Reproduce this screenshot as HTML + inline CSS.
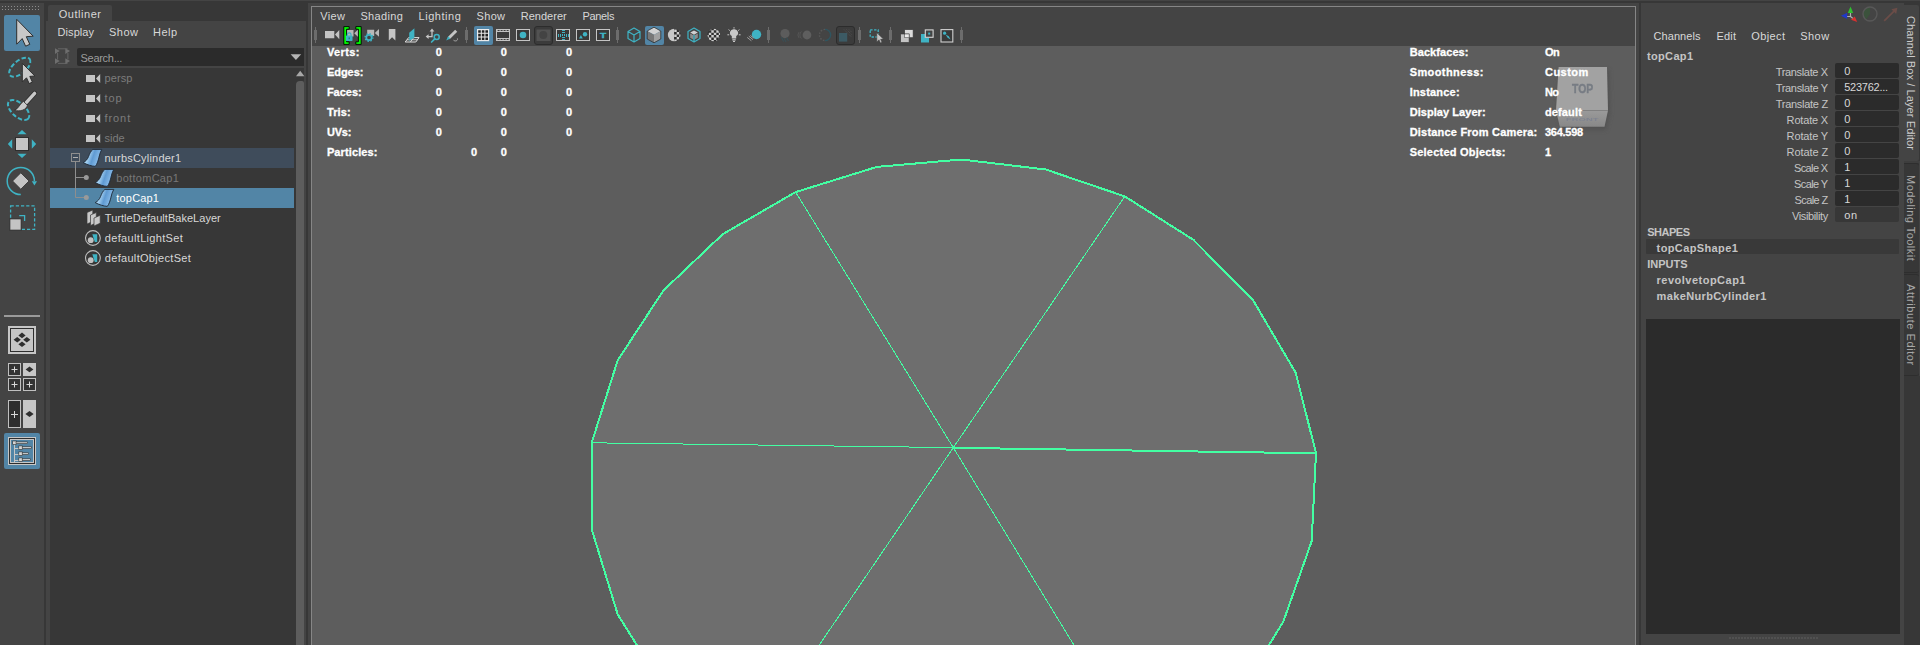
<!DOCTYPE html>
<html lang="en">
<head>
<meta charset="utf-8">
<title>Maya - Outliner / Viewport / Channel Box</title>
<style>
html,body{margin:0;padding:0;}
body{width:1920px;height:645px;overflow:hidden;background:#373737;position:relative;font-family:"Liberation Sans",sans-serif;font-size:11px;color:#ccc;}
div,svg{position:absolute;box-sizing:border-box;}
.t{white-space:pre;z-index:2;}
.p{background:#444444;}
.fld{background:#2b2b2b;border-radius:2px;left:1835px;width:64px;height:15px;}
.row{left:50px;width:244px;height:20px;}
</style>
</head>
<body>
<!-- top strip -->
<div class="p" style="left:0;top:0;width:1920px;height:1px;"></div>
<!-- left tool box -->
<div class="p" id="toolbox" style="left:0;top:3px;width:44px;height:642px;"></div>
<svg width="44" height="645" viewBox="0 0 44 645" style="left:0;top:0;">
<g fill="#8c8c8c">
<path d="M2 6h1v1h-1zM5 6h1v1h-1zM8 6h1v1h-1zM11 6h1v1h-1zM14 6h1v1h-1zM17 6h1v1h-1zM20 6h1v1h-1zM23 6h1v1h-1zM26 6h1v1h-1zM29 6h1v1h-1zM32 6h1v1h-1zM35 6h1v1h-1zM38 6h1v1h-1z"/>
<path d="M2 9h1v1h-1zM5 9h1v1h-1zM8 9h1v1h-1zM11 9h1v1h-1zM14 9h1v1h-1zM17 9h1v1h-1zM20 9h1v1h-1zM23 9h1v1h-1zM26 9h1v1h-1zM29 9h1v1h-1zM32 9h1v1h-1zM35 9h1v1h-1zM38 9h1v1h-1z"/>
</g>
<!-- select tool (active) -->
<rect x="4" y="15" width="36" height="36" rx="2" fill="#5285a6"/>
<path d="M16.7 19.3V44.2L22.2 38.6L25.6 46.2L29.8 44.3L26.3 36.7L33.2 36.2Z" fill="#c8c8c8" stroke="#2e2e2e" stroke-width="1" stroke-linejoin="round"/>
<!-- lasso -->
<ellipse cx="19.8" cy="67.2" rx="12.8" ry="6.4" transform="rotate(-40 19.8 67.2)" fill="none" stroke="#3fb3c4" stroke-width="2" stroke-dasharray="4.4 2.2"/>
<path d="M22.3 63.3V82L26.5 77.8L29.2 83.6L32.4 82.1L29.8 76.4L34.9 76Z" fill="#c8c8c8" stroke="#2e2e2e" stroke-width="1" stroke-linejoin="round"/>
<!-- paint select -->
<ellipse cx="18.6" cy="110" rx="13" ry="6.8" transform="rotate(42 18.6 110)" fill="none" stroke="#3fb3c4" stroke-width="2" stroke-dasharray="4.4 2.2"/>
<path d="M34.6 93.4L26.2 102.6" stroke="#2e2e2e" stroke-width="5" stroke-linecap="round"/>
<path d="M34.6 93.4L26.2 102.6" stroke="#c8c8c8" stroke-width="3.4" stroke-linecap="round"/>
<path d="M23.400 101.400L27.400 105.200C26.600 109.800 20 112 14.400 110.200C18.800 108.800 19.400 104 23.400 101.400Z" fill="#c8c8c8" stroke="#2e2e2e" stroke-width="0.800"/>
<!-- move -->
<rect x="15.5" y="137.5" width="13" height="13" fill="#c4c4c4" stroke="#2e2e2e" stroke-width="1"/>
<g fill="#3fb3c4"><path d="M22 130L26.6 134.3H17.4Z"/><path d="M22 158L26.6 153.7H17.4Z"/><path d="M7.8 144L12.2 139.2V148.8Z"/><path d="M36.2 144L31.8 139.2V148.8Z"/></g>
<!-- rotate -->
<path d="M20.8 194.6A13.6 13.6 0 1 1 34.4 181" fill="none" stroke="#3fb3c4" stroke-width="1.5"/>
<path d="M31.8 181.2H37L34.4 185.4Z" fill="#3fb3c4"/>
<path d="M20.8 172.8L29 181L20.8 189.2L12.6 181Z" fill="#c4c4c4" stroke="#2e2e2e" stroke-width="0.8"/>
<!-- scale -->
<rect x="10.6" y="205.8" width="24" height="23.6" fill="none" stroke="#3fb3c4" stroke-width="1.3" stroke-dasharray="3.2 2"/>
<path d="M19.2 215.6H24.6V221" fill="none" stroke="#3fb3c4" stroke-width="1.3"/>
<rect x="9.8" y="218.8" width="11.4" height="11.4" fill="#c4c4c4" stroke="#2e2e2e" stroke-width="1"/>
<!-- separator -->
<rect x="4" y="315" width="36" height="2" fill="#9a9a9a"/>
<!-- single pane -->
<rect x="8" y="326" width="28" height="28" fill="#c6c6c6"/>
<rect x="10.5" y="328.5" width="23" height="23" fill="none" stroke="#2e2e2e" stroke-width="1"/>
<g fill="#2e2e2e"><path d="M22 332.6L25.6 335.4L22 338.2L18.4 335.4Z"/><path d="M22 341.4L25.6 344.2L22 347L18.4 344.2Z"/><path d="M17.2 337L20.8 339.8L17.2 342.6L13.6 339.8Z"/><path d="M26.8 337L30.4 339.8L26.8 342.6L23.2 339.8Z"/></g>
<!-- four pane -->
<g fill="#333333" stroke="#c0c0c0" stroke-width="1">
<rect x="8.5" y="363.5" width="12" height="12"/><rect x="8.5" y="378.5" width="12" height="12"/><rect x="23.5" y="378.5" width="12" height="12"/>
</g>
<rect x="23" y="363" width="13" height="13" fill="#c6c6c6"/>
<path d="M29.5 366.6L33.4 369.4L29.5 372.2L25.6 369.4Z" fill="#2e2e2e"/>
<g stroke="#d8d8d8" stroke-width="1" fill="none"><path d="M11.5 369.5h6M14.5 366.5v6M11.5 384.5h6M14.5 381.5v6M26.5 384.5h6M29.5 381.5v6"/></g>
<!-- two pane -->
<rect x="8.5" y="400.5" width="12" height="27" fill="#2e2e2e" stroke="#c0c0c0" stroke-width="1"/>
<rect x="23" y="400" width="13" height="28" fill="#c6c6c6"/>
<path d="M29.5 411L33.6 414L29.5 417L25.4 414Z" fill="#2e2e2e"/>
<path d="M11 414.5h7M14.5 411v7" stroke="#d8d8d8" stroke-width="1" fill="none"/>
<!-- outliner pane (active) -->
<rect x="4" y="433" width="36" height="36" rx="2" fill="#5285a6"/>
<rect x="8" y="437" width="28" height="28" fill="#c6c6c6"/>
<rect x="9.500" y="438.500" width="25" height="25" fill="#c6c6c6" stroke="#2e2e2e" stroke-width="1"/>
<rect x="11" y="440" width="22" height="22" fill="#5285a6"/>
<g stroke="#c6c6c6" stroke-width="1" fill="none"><path d="M14.5 444v19M14.500 448.5h5M14.5 454.5h5M14.5 460.5h5"/></g>
<g fill="#d6d6d6" stroke="#2e2e2e" stroke-width="0.6">
<rect x="12.7" y="441" width="3.6" height="3.6"/><rect x="16" y="441.9" width="11.4" height="1.8"/>
<rect x="18.8" y="445.9" width="3.6" height="3.6"/><rect x="22.2" y="446.8" width="9.2" height="1.8"/>
<rect x="18.8" y="451.9" width="3.6" height="3.6"/><rect x="22.2" y="452.8" width="6.2" height="1.8"/>
<rect x="18.8" y="457.9" width="3.6" height="3.6"/><rect x="22.2" y="458.8" width="8.2" height="1.8"/>
</g>
</svg>

<!-- outliner -->
<div class="p" style="left:48px;top:5px;width:64px;height:17px;border-radius:2px 2px 0 0;"></div>
<div class="p" style="left:46px;top:21px;width:260px;height:624px;"></div>
<div style="left:77px;top:48px;width:227px;height:18px;background:#2b2b2b;border-radius:2px 0 0 2px;"></div>
<div style="left:50px;top:68px;width:254px;height:577px;background:#373737;"></div>
<!-- row highlights -->
<div class="row" style="top:148px;background:#3f4c5b;"></div>
<div class="row" style="top:188px;background:#5285a6;"></div>
<!-- scrollbar -->
<div style="left:296px;top:81px;width:8px;height:570px;background:#5d5d5d;border-radius:4px 2px 0 0;"></div>
<svg width="260" height="600" viewBox="46 45 260 600" style="left:46px;top:45px;">
<defs>
<linearGradient id="ng" x1="0" y1="0.2" x2="1" y2="0.5">
<stop offset="0" stop-color="#8fc0ea"/><stop offset="0.3" stop-color="#a6d2f2"/><stop offset="0.55" stop-color="#5f9ad2"/><stop offset="0.8" stop-color="#7fb4e4"/><stop offset="1" stop-color="#2f659f"/>
</linearGradient>
</defs>
<!-- search filter icon -->
<g fill="#6e6e6e"><path d="M55 48.3L59.7 51.1L55 54Z"/><path d="M65.3 48.3L70 51.1L65.3 54Z"/><path d="M55 58.3L59.7 61.1L55 64Z"/><path d="M65.3 58.3L70 61.1L65.3 64Z"/></g>
<path d="M58 48.8H67.5M58 63.4H67.5M57.6 53V59.5M67.9 53V59.500" stroke="#6a6a6a" stroke-width="0.9" fill="none"/>
<!-- dropdown arrow -->
<path d="M290.6 54.3H301.200L295.900 60Z" fill="#b4b4b4"/>
<!-- scroll up arrow -->
<path d="M296 76.200H304.400L300.200 70.800Z" fill="#a8a8a8"/>
<!-- camera icons -->
<g fill="#c4c4c4">
<path d="M86 75h9v7h-9zM96 78.500L100.200 74v9z"/>
<path d="M86 95h9v7h-9zM96 98.500L100.200 94v9z"/>
<path d="M86 115h9v7h-9zM96 118.500L100.200 114v9z"/>
<path d="M86 135h9v7h-9zM96 138.500L100.200 134v9z"/>
</g>
<!-- expand box and tree lines -->
<rect x="71.500" y="153.500" width="8" height="8" fill="none" stroke="#8e8e8e" stroke-width="1"/>
<path d="M73 157.500h5" stroke="#b0b0b0" stroke-width="1"/>
<path d="M75.500 162V197.500H85M75.500 177.500H85" stroke="#8e8e8e" stroke-width="1" fill="none"/>
<circle cx="86.300" cy="177.400" r="2.500" fill="#9a9a9a"/><circle cx="86.300" cy="197.400" r="2.500" fill="#9a9a9a"/>
<!-- nurbs icons -->
<g id="nurbs1" transform="translate(84 148)"><path d="M-0.800 14.600C2 13.200 3.600 11 4.600 8.400C5.600 5.600 7 2.800 8.900 1.400H17.800C16.400 3.600 15.600 6.400 15 9.200C14.200 12.800 13.200 16 11.300 18.400C7.500 18.100 3.500 16.900 -0.800 14.600Z" fill="url(#ng)" stroke="#1f2a38" stroke-width="0.9" stroke-linejoin="round"/></g>
<g transform="translate(96 168)"><path d="M-0.800 14.600C2 13.200 3.600 11 4.600 8.400C5.600 5.600 7 2.800 8.900 1.400H17.800C16.400 3.600 15.600 6.400 15 9.200C14.200 12.800 13.200 16 11.300 18.400C7.500 18.100 3.500 16.900 -0.800 14.600Z" fill="url(#ng)" stroke="#1f2a38" stroke-width="0.9" stroke-linejoin="round"/></g>
<g transform="translate(96 188)"><path d="M-0.800 14.600C2 13.200 3.600 11 4.600 8.400C5.600 5.600 7 2.800 8.900 1.400H17.800C16.400 3.600 15.600 6.400 15 9.200C14.200 12.800 13.200 16 11.300 18.400C7.500 18.100 3.500 16.900 -0.800 14.600Z" fill="url(#ng)" stroke="#1f2a38" stroke-width="0.9" stroke-linejoin="round"/></g>
<!-- turtle bake layer icon -->
<g fill="#c8c8c8" stroke="#3a3a3a" stroke-width="0.700" stroke-linejoin="round">
<path d="M87 212.500L92.800 210V221.500L87 224Z"/>
<path d="M90.500 215L96.300 212.500V223L90.500 225.500Z"/>
<path d="M94 218L100.200 215.300V223.200L94 226Z"/>
</g>
<!-- set icons -->
<g>
<circle cx="92.900" cy="238" r="7.400" fill="none" stroke="#bdbdbd" stroke-width="1.100"/>
<path d="M92.300 234.200H97.200V242H94.800Z" fill="#3fb3c4"/>
<circle cx="90.700" cy="240.200" r="2.900" fill="#c0c0c0"/>
<circle cx="92.900" cy="258" r="7.400" fill="none" stroke="#bdbdbd" stroke-width="1.100"/>
<path d="M92.300 254.200H97.200V262H94.800Z" fill="#3fb3c4"/>
<circle cx="90.700" cy="260.200" r="2.900" fill="#c0c0c0"/>
</g>
</svg>

<!-- viewport panel -->
<div class="p" style="left:308px;top:3px;width:1331px;height:642px;"></div>
<div style="left:311px;top:6px;width:1325px;height:645px;border:1px solid #868686;"></div>
<div style="left:312px;top:46px;width:1323px;height:599px;background:#5d5d5d;overflow:hidden;">
<svg width="1323" height="599" viewBox="312 46 1323 599" style="left:0;top:0;">
<defs><linearGradient id="fg" x1="0" y1="0" x2="0" y2="1"><stop offset="0" stop-color="#9a9a9a"/><stop offset="1" stop-color="#888888"/></linearGradient><filter id="bl" x="-20%" y="-20%" width="140%" height="140%"><feGaussianBlur stdDeviation="2.2"/></filter></defs>
<!-- nurbs cap (selected) -->
<g shape-rendering="crispEdges">
<path d="M961.300 159.500L1045.800 169.500L1124.800 196.400L1193.400 239.800L1253.300 300.600L1295.600 372.600L1316 453L1311.700 541.100L1283.400 621.500L1250 676L650 666L617.700 614.400L591.700 529.300V442.800L617.700 360.400L663.300 290.600L722.700 234.200L795.600 192.100L876.800 166.900Z" fill="#6e6e6e" stroke="#43ffa3" stroke-width="2" stroke-linejoin="round"/>
<path d="M953.300 447.600L795.600 192.100M953.300 447.600L1124.800 196.400M953.300 447.600L1085.900 664.700M953.300 447.600L805.900 664.700M953.300 447.600L591.700 442.800" stroke="#43ffa3" stroke-width="1" fill="none"/>
<path d="M953.300 447.800L1316 453.300" stroke="#43ffa3" stroke-width="2" fill="none"/>
</g>
<!-- view cube -->
<path d="M1559 70L1609 70L1610 113L1606 130L1562 130L1557 113Z" fill="#4a4a4a" opacity="0.55" filter="url(#bl)"/>
<path d="M1558.600 67L1607 67L1608 110.600L1556 110.600Z" fill="#a2a2a2"/>
<path d="M1556 110.600H1608L1604.500 126.800H1559.800Z" fill="url(#fg)"/>
<path d="M1583 110.500H1608" stroke="#7e7e7e" stroke-width="0.800"/>
</svg>

</div>
<svg width="700" height="24" viewBox="312 23 700 24" style="left:312px;top:23px;">
<!-- separators -->
<g fill="#6c6c6c">
<path d="M315 27h1v16h-1zM314 30h3v10h-3z"/>
<path d="M466 27h1v16h-1zM465 30h3v10h-3z"/>
<path d="M617 27h1v16h-1zM616 30h3v10h-3z"/>
<path d="M768 27h1v16h-1zM767 30h3v10h-3z"/>
<path d="M859 27h1v16h-1zM858 30h3v10h-3z"/>
<path d="M890 27h1v16h-1zM889 30h3v10h-3z"/>
<path d="M961 27h1v16h-1zM960 30h3v10h-3z"/>
</g>
<!-- active / pressed backgrounds -->
<rect x="474" y="26" width="19" height="19" rx="2" fill="#5285a6"/>
<rect x="645" y="26" width="19" height="19" rx="2" fill="#5285a6"/>
<rect x="534.500" y="26.500" width="18" height="18" rx="2.500" fill="#3b3b3b" stroke="#2c2c2c"/>
<rect x="836.500" y="26.500" width="18" height="18" rx="2.500" fill="#3b3b3b" stroke="#2c2c2c"/>
<!-- 1 select camera -->
<path d="M325 31h9.300v7.200h-9.300zM335 34.600L339.300 30v9.200z" fill="#c4c4c4"/>
<!-- 2 lock camera -->
<path d="M346.500 30h7v6.500h-7zM354.200 33.200L358.400 29.200v8z" fill="#b8b8b8"/>
<path d="M343.800 26.600H349.200V29.200H346.600V41.800H349.200V44.400H343.800ZM361.200 26.600H355.800V29.200H358.400V41.800H355.800V44.400H361.200Z" fill="#00ff00" stroke="#000" stroke-width="0.900" stroke-linejoin="miter"/>
<path d="M347.400 35.800V34.600A1.800 1.800 0 0 1 351 34.600V35.800" fill="none" stroke="#3fb3c4" stroke-width="1.200"/>
<rect x="345.900" y="35.600" width="6.600" height="5.300" rx="0.600" fill="#3fb3c4"/>
<rect x="348.600" y="37.400" width="1.200" height="1.800" fill="#2a6a78"/>
<!-- 3 camera attributes -->
<path d="M367.200 29.800h7v6.200h-7zM374.800 32.900L379 29v7.800z" fill="#b8b8b8"/>
<circle cx="369" cy="37.500" r="2.700" fill="#444" stroke="#3fb3c4" stroke-width="1.700"/>
<circle cx="369" cy="37.500" r="3.900" fill="none" stroke="#3fb3c4" stroke-width="1.300" stroke-dasharray="1.400 1.660"/>
<!-- 4 bookmarks -->
<path d="M388.800 29H395.400V40.400L392.100 37.200L388.800 40.400Z" fill="#c4c4c4"/>
<!-- 5 image plane -->
<path d="M405.200 42L408.600 37.600H419L415.800 42Z" fill="#444" stroke="#e0e0e0" stroke-width="1"/><path d="M407 39.800H417.400M413.600 37.600L410.400 42" fill="none" stroke="#e0e0e0" stroke-width="0.900"/>
<path d="M409.200 32.800L414.400 28.200V37.800L409.200 40.800Z" fill="#3fb3c4"/>
<!-- 6 2D pan/zoom -->
<path d="M432 30.500V36.600H427" fill="none" stroke="#c4c4c4" stroke-width="1.300"/>
<path d="M432 28.400L434.400 31.400H429.600ZM425.600 36.600L428.600 34.200V39Z" fill="#c4c4c4"/>
<circle cx="436.700" cy="37" r="2.500" fill="none" stroke="#3fb3c4" stroke-width="1.500"/>
<path d="M434.800 38.900L431.600 42" stroke="#3fb3c4" stroke-width="1.700" stroke-linecap="round"/>
<!-- 7 grease pencil -->
<path d="M456.200 30.800L448.600 38.200" stroke="#c4c4c4" stroke-width="3" stroke-linecap="butt"/>
<path d="M448.200 36.200L450.400 38.600L446.200 40.600Z" fill="#3fb3c4"/>
<path d="M453.500 40.200C455.500 41.800 458.200 40.600 457.400 38.400" fill="none" stroke="#b0b0b0" stroke-width="0.900"/>
<!-- 8 grid -->
<rect x="477" y="29" width="12.200" height="12.200" fill="#ececec"/>
<path d="M478.200 30.200h2.600v2.600h-2.600zM481.800 30.200h2.600v2.600h-2.600zM485.400 30.200h2.600v2.600h-2.600zM478.200 33.800h2.600v2.600h-2.600zM481.800 33.800h2.600v2.600h-2.600zM485.400 33.800h2.600v2.600h-2.600zM478.200 37.400h2.600v2.600h-2.600zM481.800 37.400h2.600v2.600h-2.600zM485.400 37.400h2.600v2.600h-2.600z" fill="#222"/>
<!-- 9 film gate -->
<rect x="496" y="29" width="14" height="12" fill="#c4c4c4"/>
<rect x="497" y="32" width="12" height="6" fill="#3c3c3c"/>
<path d="M497.600 30h2v1h-2zM500.600 30h2v1h-2zM503.600 30h2v1h-2zM506.600 30h2v1h-2zM497.600 39h2v1h-2zM500.600 39h2v1h-2zM503.600 39h2v1h-2zM506.600 39h2v1h-2z" fill="#3c3c3c"/>
<!-- 10 resolution gate -->
<rect x="516.500" y="29.500" width="13" height="11" fill="#393939" stroke="#c4c4c4"/>
<circle cx="523" cy="35" r="3.300" fill="#3fb3c4"/>
<!-- 11 gate mask (disabled) -->
<rect x="536.500" y="29.500" width="14" height="11.500" fill="#525252"/>
<circle cx="543.300" cy="35" r="4" fill="#434343"/>
<!-- 12 field chart -->
<rect x="556.500" y="29.500" width="13" height="11" fill="#393939" stroke="#c4c4c4"/>
<path d="M558.500 33.500v3M560.500 33.500v3M562.500 34v2M564.500 34v2M566.500 33.500v3M568.500 33.500v3" stroke="#3fb3c4" stroke-width="1" shape-rendering="crispEdges"/>
<path d="M562 30.500h3M562 32.500h3M562 37.500h3M562 39.500h3" stroke="#3fb3c4" stroke-width="1" shape-rendering="crispEdges"/>
<!-- 13 safe action -->
<rect x="576.500" y="29.500" width="13" height="11" fill="#393939" stroke="#c4c4c4"/>
<circle cx="585" cy="34.300" r="2.200" fill="#3fb3c4"/>
<path d="M579 38.400H582.800L580.900 34.900Z" fill="#3fb3c4"/>
<!-- 14 safe title -->
<rect x="596.500" y="29.500" width="13" height="11" fill="#393939" stroke="#c4c4c4"/>
<text transform="translate(603 38.300) scale(1.250 1)" x="0" y="0" text-anchor="middle" font-family="Liberation Sans, sans-serif" font-weight="700" font-size="8" fill="#3fb3c4" stroke="#3fb3c4" stroke-width="0.500">T</text>
<!-- 15 wireframe -->
<path d="M634 28L640 31.500V38.500L634 42L628 38.500V31.500ZM634 35L628 31.500M634 35L640 31.500M634 35V42" fill="none" stroke="#3fb3c4" stroke-width="1.200" stroke-linejoin="round"/>
<!-- 16 smooth shade (active) -->
<path d="M654 27.200L660.800 31L654 34.800L647.200 31Z" fill="#d2d2d2"/>
<path d="M647.200 31L654 34.800V42.800L647.200 39Z" fill="#787878"/>
<path d="M654 34.800L660.800 31V39L654 42.800Z" fill="#a2a2a2"/>
<path d="M654 27.200L660.800 31V39L654 42.800L647.200 39V31Z" fill="none" stroke="#2e2e2e" stroke-width="0.800" stroke-linejoin="round"/>
<!-- 17 default material half checker -->
<clipPath id="c17"><circle cx="674.200" cy="35" r="6.300"/></clipPath>
<g clip-path="url(#c17)">
<rect x="667" y="28" width="7.200" height="14" fill="#c8c8c8"/>
<rect x="674.200" y="28" width="7" height="14" fill="#2e2e2e"/>
<path d="M674.200 29.500h2.500v2.500h-2.500zM679.200 29.500h2.500v2.500h-2.500zM676.700 32h2.500v2.500h-2.500zM674.200 34.500h2.500v2.500h-2.500zM679.200 34.500h2.500v2.500h-2.500zM676.700 37h2.500v2.500h-2.500zM674.200 39.500h2.500v2.500h-2.500z" fill="#d0d0d0"/>
</g>
<!-- 18 wire on shaded -->
<path d="M694 28L700 31.500V38.500L694 42L688 38.500V31.500Z" fill="none" stroke="#3fb3c4" stroke-width="1.200" stroke-linejoin="round"/>
<path d="M694 30.400L697.800 32.600L694 34.800L690.200 32.600Z" fill="#d0d0d0"/>
<path d="M690.200 33.400L693.400 35.300V39.600L690.200 37.700ZM697.800 33.400L694.600 35.300V39.600L697.800 37.700Z" fill="#8c8c8c"/>
<path d="M694 35V42" stroke="#3fb3c4" stroke-width="1.400"/>
<!-- 19 textured checker sphere -->
<clipPath id="c19"><circle cx="713.800" cy="35" r="6.300"/></clipPath>
<g clip-path="url(#c19)">
<rect x="707" y="28" width="14" height="14" fill="#2e2e2e"/>
<path d="M708.800 28h2.500v2.300h-2.500zM713.800 28h2.500v2.300h-2.500zM711.300 30.300h2.500v2.400h-2.500zM716.300 30.300h2.500v2.400h-2.500zM708.800 32.700h2.500v2.400h-2.500zM713.800 32.700h2.500v2.400h-2.500zM718.800 32.700h2.500v2.400h-2.500zM706.300 35.100h2.500v2.400h-2.500zM711.300 35.100h2.500v2.400h-2.500zM716.300 35.100h2.500v2.400h-2.500zM708.800 37.500h2.500v2.400h-2.500zM713.800 37.500h2.500v2.400h-2.500zM718.800 37.500h2.500v2.400h-2.500zM711.300 39.900h2.500v2.400h-2.500zM716.300 39.900h2.500v2.400h-2.500z" fill="#d0d0d0"/>
</g>
<!-- 20 use all lights -->
<path d="M734 29.200A3.700 3.700 0 0 1 736.200 36.100V38.400H731.800V36.100A3.700 3.700 0 0 1 734 29.200Z" fill="#c8c8c8"/>
<rect x="732.300" y="39.200" width="3.400" height="1.300" fill="#c8c8c8"/><rect x="733" y="41" width="2" height="1" fill="#c8c8c8"/>
<path d="M734 27.200v1.300M728.600 29.600l1.200 1M739.400 29.600l-1.200 1M727.400 34.800h1.800M740.600 34.800h-1.800" stroke="#c8c8c8" stroke-width="1"/>
<!-- 21 shadows -->
<circle cx="756.500" cy="34.500" r="4.700" fill="#3fb3c4"/>
<path d="M747.200 37.400L751.400 40.800M748.800 36.200L753 39.600M750.400 35.400L753.600 38" stroke="#a8a8a8" stroke-width="0.900"/>
<!-- 22 AO, motion blur, AA (disabled) -->
<circle cx="785" cy="33.600" r="4.600" fill="#5c5c5c"/>
<path d="M781.400 37.200L783.600 41.600M784 38L786 42M786.600 37.600L788.400 41" stroke="#35525a" stroke-width="0.900"/>
<circle cx="807" cy="35" r="4.400" fill="#5e5e5e"/>
<path d="M801.400 31.400A5 5 0 0 0 801.400 38.600M799 32A5 5 0 0 0 799 38" fill="none" stroke="#565656" stroke-width="0.900"/>
<path d="M825 29.400A5.600 5.600 0 0 0 825 40.600" fill="none" stroke="#585858" stroke-width="1.400" stroke-dasharray="1.500 1.500"/>
<path d="M825 29.400A5.600 5.600 0 0 1 825 40.600" fill="none" stroke="#2f5560" stroke-width="1.400"/>
<!-- 23 depth of field (pressed, disabled) -->
<rect x="839" y="33" width="8.200" height="8.600" fill="#3c5a64"/>
<path d="M844 29.500L851.500 37M846.500 29.500L851.500 34.500M849 29.500L851.500 32" stroke="#555" stroke-width="0.900" stroke-dasharray="1 1"/>
<!-- 24 isolate select -->
<rect x="870.200" y="29.800" width="8" height="7.200" fill="none" stroke="#3fb3c4" stroke-width="1.300" stroke-dasharray="2.400 1.500"/>
<path d="M876.800 32.800V42L879 39.800L880.400 43L882 42.300L880.600 39.300L883.400 39.100Z" fill="#c4c4c4" stroke="#3a3a3a" stroke-width="0.500"/>
<!-- 25 xray -->
<rect x="904.700" y="29.700" width="8.400" height="8" fill="#dcdcdc" stroke="#3a3a3a" stroke-width="0.600"/>
<rect x="900.700" y="34" width="8.400" height="8.400" fill="#c4c4c4" stroke="#3a3a3a" stroke-width="0.600"/>
<rect x="904.700" y="34" width="4.400" height="3.700" fill="#ededed" stroke="#3a3a3a" stroke-width="0.500"/>
<!-- 26 xray active components -->
<path d="M921 34H925V38H929V42.400H921Z" fill="#3fb3c4"/>
<rect x="925.300" y="29.900" width="7.800" height="7.400" fill="#444" stroke="#d8d8d8" stroke-width="1.100"/>
<rect x="928.200" y="32.600" width="2" height="2" fill="#3fb3c4"/>
<!-- 27 xray joints -->
<rect x="941" y="29.600" width="11.800" height="12.400" fill="#393939" stroke="#d0d0d0" stroke-width="1.100"/>
<circle cx="944.600" cy="33.200" r="1.600" fill="#3fb3c4"/>
<path d="M945.600 34.400L948.800 36.200L950.600 39.600L947.600 37.800Z" fill="#3fb3c4"/>
</svg>

<!-- channel box -->
<div class="p" style="left:1641px;top:3px;width:263px;height:642px;"></div>
<!-- vertical tab strip -->
<div class="p" style="left:1904px;top:5px;width:15px;height:156px;border-radius:0 2px 2px 0;"></div>
<div style="left:1919px;top:161px;width:1px;height:215px;background:#424242;"></div>
<div style="left:1904px;top:161px;width:15px;height:2px;background:#3e3e3e;"></div>
<div style="left:1904px;top:163px;width:15px;height:110px;border-top:1px solid #2e2e2e;border-bottom:1px solid #2e2e2e;border-radius:0 3px 3px 0;background:#373737;"></div>
<div style="left:1904px;top:274px;width:15px;height:102px;border-top:1px solid #2e2e2e;border-bottom:1px solid #2e2e2e;border-radius:0 3px 3px 0;background:#373737;"></div>
<!-- top-right icons -->
<svg width="64" height="20" viewBox="1838 4 64 20" style="left:1838px;top:4px;">
<path d="M1850.500 13V16.500H1847M1850.500 16.500L1853 18.500" fill="none" stroke="#b0b0b0" stroke-width="1.200"/>
<path d="M1850.500 6.600L1853.200 13H1847.800Z" fill="#2fc02f"/>
<path d="M1841 15.800L1847.200 12.800V19Z" fill="#2038c8"/>
<path d="M1857.200 22L1851 19.800L1854.800 16.600Z" fill="#d83030"/>
<path d="M1870 14V7A7 7 0 0 0 1866 19.740Z" fill="#3b523c"/>
<circle cx="1870" cy="14" r="7" fill="none" stroke="#585858" stroke-width="1.400"/>
<path d="M1884.200 20.800L1895.600 9.600" stroke="#6b4d48" stroke-width="1.800"/>
<path d="M1897.400 7.800L1896.200 14L1891.400 9.200Z" fill="#6b4d48"/>
</svg>
<!-- fields -->
<div class="fld" style="top:63px;"></div><div class="fld" style="top:79px;"></div><div class="fld" style="top:95px;"></div>
<div class="fld" style="top:111px;"></div><div class="fld" style="top:127px;"></div><div class="fld" style="top:143px;"></div>
<div class="fld" style="top:159px;"></div><div class="fld" style="top:175px;"></div><div class="fld" style="top:191px;"></div>
<div class="fld" style="top:207px;background:#373737;"></div>
<!-- shapes row -->
<div style="left:1646px;top:239px;width:253px;height:15px;background:#393939;border-radius:1px;"></div>
<!-- layer area -->
<div style="left:1646px;top:319px;width:254px;height:315px;background:#2b2b2b;"></div>
<svg width="90" height="2" viewBox="0 0 90 2" style="left:1729px;top:637px;"><path d="M0.500 1h88" stroke="#7a7a7a" stroke-width="1" stroke-dasharray="1 2"/></svg>

<div class="t" style="left:58.70px;top:8.00px;font-size:11px;line-height:12px;color:#d8d8d8;letter-spacing:0.538px;">Outliner</div>
<div class="t" style="left:57.60px;top:26.00px;font-size:11px;line-height:12px;color:#d8d8d8;letter-spacing:0.054px;">Display</div>
<div class="t" style="left:109.00px;top:26.00px;font-size:11px;line-height:12px;color:#d8d8d8;letter-spacing:0.490px;">Show</div>
<div class="t" style="left:153.00px;top:26.00px;font-size:11px;line-height:12px;color:#d8d8d8;letter-spacing:0.458px;">Help</div>
<div class="t" style="left:80.50px;top:52.00px;font-size:11px;line-height:12px;color:#9c9c9c;letter-spacing:-0.279px;">Search...</div>
<div class="t" style="left:104.50px;top:72.00px;font-size:11px;line-height:12px;color:#7c7c7c;letter-spacing:0.117px;">persp</div>
<div class="t" style="left:104.50px;top:92.00px;font-size:11px;line-height:12px;color:#7c7c7c;letter-spacing:0.852px;">top</div>
<div class="t" style="left:104.50px;top:112.00px;font-size:11px;line-height:12px;color:#7c7c7c;letter-spacing:0.921px;">front</div>
<div class="t" style="left:104.50px;top:132.00px;font-size:11px;line-height:12px;color:#7c7c7c;">side</div>
<div class="t" style="left:104.50px;top:152.00px;font-size:11px;line-height:12px;color:#d8d8d8;letter-spacing:0.194px;">nurbsCylinder1</div>
<div class="t" style="left:116.30px;top:172.00px;font-size:11px;line-height:12px;color:#787878;letter-spacing:0.285px;">bottomCap1</div>
<div class="t" style="left:116.30px;top:192.00px;font-size:11px;line-height:12px;color:#ffffff;letter-spacing:0.184px;">topCap1</div>
<div class="t" style="left:104.80px;top:212.00px;font-size:11px;line-height:12px;color:#d8d8d8;letter-spacing:0.040px;">TurtleDefaultBakeLayer</div>
<div class="t" style="left:104.80px;top:232.00px;font-size:11px;line-height:12px;color:#d8d8d8;letter-spacing:0.329px;">defaultLightSet</div>
<div class="t" style="left:104.80px;top:252.00px;font-size:11px;line-height:12px;color:#d8d8d8;letter-spacing:0.310px;">defaultObjectSet</div>
<div class="t" style="left:320.25px;top:10.00px;font-size:11px;line-height:12px;color:#d8d8d8;letter-spacing:0.365px;">View</div>
<div class="t" style="left:360.40px;top:10.00px;font-size:11px;line-height:12px;color:#d8d8d8;letter-spacing:0.337px;">Shading</div>
<div class="t" style="left:418.50px;top:10.00px;font-size:11px;line-height:12px;color:#d8d8d8;letter-spacing:0.550px;">Lighting</div>
<div class="t" style="left:476.60px;top:10.00px;font-size:11px;line-height:12px;color:#d8d8d8;letter-spacing:0.290px;">Show</div>
<div class="t" style="left:520.70px;top:10.00px;font-size:11px;line-height:12px;color:#d8d8d8;letter-spacing:0.034px;">Renderer</div>
<div class="t" style="left:582.60px;top:10.00px;font-size:11px;line-height:12px;color:#d8d8d8;letter-spacing:-0.368px;">Panels</div>
<div class="t" style="left:326.90px;top:46.00px;font-size:11px;line-height:12px;color:#ffffff;font-weight:700;letter-spacing:0.384px;z-index:3;-webkit-text-stroke:0.3px #fff;">Verts:</div>
<div class="t" style="left:435.70px;top:46.00px;font-size:11px;line-height:12px;color:#ffffff;font-weight:700;z-index:3;-webkit-text-stroke:0.3px #fff;">0</div>
<div class="t" style="left:500.80px;top:46.00px;font-size:11px;line-height:12px;color:#ffffff;font-weight:700;z-index:3;-webkit-text-stroke:0.3px #fff;">0</div>
<div class="t" style="left:566.00px;top:46.00px;font-size:11px;line-height:12px;color:#ffffff;font-weight:700;z-index:3;-webkit-text-stroke:0.3px #fff;">0</div>
<div class="t" style="left:326.90px;top:66.00px;font-size:11px;line-height:12px;color:#ffffff;font-weight:700;letter-spacing:-0.017px;z-index:3;-webkit-text-stroke:0.3px #fff;">Edges:</div>
<div class="t" style="left:435.70px;top:66.00px;font-size:11px;line-height:12px;color:#ffffff;font-weight:700;z-index:3;-webkit-text-stroke:0.3px #fff;">0</div>
<div class="t" style="left:500.80px;top:66.00px;font-size:11px;line-height:12px;color:#ffffff;font-weight:700;z-index:3;-webkit-text-stroke:0.3px #fff;">0</div>
<div class="t" style="left:566.00px;top:66.00px;font-size:11px;line-height:12px;color:#ffffff;font-weight:700;z-index:3;-webkit-text-stroke:0.3px #fff;">0</div>
<div class="t" style="left:326.90px;top:86.00px;font-size:11px;line-height:12px;color:#ffffff;font-weight:700;letter-spacing:-0.012px;z-index:3;-webkit-text-stroke:0.3px #fff;">Faces:</div>
<div class="t" style="left:435.70px;top:86.00px;font-size:11px;line-height:12px;color:#ffffff;font-weight:700;z-index:3;-webkit-text-stroke:0.3px #fff;">0</div>
<div class="t" style="left:500.80px;top:86.00px;font-size:11px;line-height:12px;color:#ffffff;font-weight:700;z-index:3;-webkit-text-stroke:0.3px #fff;">0</div>
<div class="t" style="left:566.00px;top:86.00px;font-size:11px;line-height:12px;color:#ffffff;font-weight:700;z-index:3;-webkit-text-stroke:0.3px #fff;">0</div>
<div class="t" style="left:326.90px;top:106.00px;font-size:11px;line-height:12px;color:#ffffff;font-weight:700;letter-spacing:0.141px;z-index:3;-webkit-text-stroke:0.3px #fff;">Tris:</div>
<div class="t" style="left:435.70px;top:106.00px;font-size:11px;line-height:12px;color:#ffffff;font-weight:700;z-index:3;-webkit-text-stroke:0.3px #fff;">0</div>
<div class="t" style="left:500.80px;top:106.00px;font-size:11px;line-height:12px;color:#ffffff;font-weight:700;z-index:3;-webkit-text-stroke:0.3px #fff;">0</div>
<div class="t" style="left:566.00px;top:106.00px;font-size:11px;line-height:12px;color:#ffffff;font-weight:700;z-index:3;-webkit-text-stroke:0.3px #fff;">0</div>
<div class="t" style="left:326.90px;top:126.00px;font-size:11px;line-height:12px;color:#ffffff;font-weight:700;letter-spacing:-0.188px;z-index:3;-webkit-text-stroke:0.3px #fff;">UVs:</div>
<div class="t" style="left:435.70px;top:126.00px;font-size:11px;line-height:12px;color:#ffffff;font-weight:700;z-index:3;-webkit-text-stroke:0.3px #fff;">0</div>
<div class="t" style="left:500.80px;top:126.00px;font-size:11px;line-height:12px;color:#ffffff;font-weight:700;z-index:3;-webkit-text-stroke:0.3px #fff;">0</div>
<div class="t" style="left:566.00px;top:126.00px;font-size:11px;line-height:12px;color:#ffffff;font-weight:700;z-index:3;-webkit-text-stroke:0.3px #fff;">0</div>
<div class="t" style="left:326.90px;top:146.00px;font-size:11px;line-height:12px;color:#ffffff;font-weight:700;letter-spacing:0.119px;z-index:3;-webkit-text-stroke:0.3px #fff;">Particles:</div>
<div class="t" style="left:471.00px;top:146.00px;font-size:11px;line-height:12px;color:#ffffff;font-weight:700;z-index:3;-webkit-text-stroke:0.3px #fff;">0</div>
<div class="t" style="left:500.80px;top:146.00px;font-size:11px;line-height:12px;color:#ffffff;font-weight:700;z-index:3;-webkit-text-stroke:0.3px #fff;">0</div>
<div class="t" style="left:1409.70px;top:46.00px;font-size:11px;line-height:12px;color:#ffffff;font-weight:700;letter-spacing:0.078px;z-index:3;-webkit-text-stroke:0.3px #fff;">Backfaces:</div>
<div class="t" style="left:1545.00px;top:46.00px;font-size:11px;line-height:12px;color:#ffffff;font-weight:700;letter-spacing:-0.600px;z-index:3;-webkit-text-stroke:0.3px #fff;">On</div>
<div class="t" style="left:1409.70px;top:66.00px;font-size:11px;line-height:12px;color:#ffffff;font-weight:700;letter-spacing:0.401px;z-index:3;-webkit-text-stroke:0.3px #fff;">Smoothness:</div>
<div class="t" style="left:1545.00px;top:66.00px;font-size:11px;line-height:12px;color:#ffffff;font-weight:700;letter-spacing:0.449px;z-index:3;-webkit-text-stroke:0.3px #fff;">Custom</div>
<div class="t" style="left:1409.70px;top:86.00px;font-size:11px;line-height:12px;color:#ffffff;font-weight:700;letter-spacing:0.200px;z-index:3;-webkit-text-stroke:0.3px #fff;">Instance:</div>
<div class="t" style="left:1545.00px;top:86.00px;font-size:11px;line-height:12px;color:#ffffff;font-weight:700;letter-spacing:-0.600px;z-index:3;-webkit-text-stroke:0.3px #fff;">No</div>
<div class="t" style="left:1409.70px;top:106.00px;font-size:11px;line-height:12px;color:#ffffff;font-weight:700;letter-spacing:0.054px;z-index:3;-webkit-text-stroke:0.3px #fff;">Display Layer:</div>
<div class="t" style="left:1545.00px;top:106.00px;font-size:11px;line-height:12px;color:#ffffff;font-weight:700;letter-spacing:0.123px;z-index:3;-webkit-text-stroke:0.3px #fff;">default</div>
<div class="t" style="left:1409.70px;top:126.00px;font-size:11px;line-height:12px;color:#ffffff;font-weight:700;letter-spacing:0.205px;z-index:3;-webkit-text-stroke:0.3px #fff;">Distance From Camera:</div>
<div class="t" style="left:1545.00px;top:126.00px;font-size:11px;line-height:12px;color:#ffffff;font-weight:700;letter-spacing:-0.278px;z-index:3;-webkit-text-stroke:0.3px #fff;">364.598</div>
<div class="t" style="left:1409.70px;top:146.00px;font-size:11px;line-height:12px;color:#ffffff;font-weight:700;letter-spacing:0.217px;z-index:3;-webkit-text-stroke:0.3px #fff;">Selected Objects:</div>
<div class="t" style="left:1545.00px;top:146.00px;font-size:11px;line-height:12px;color:#ffffff;font-weight:700;z-index:3;-webkit-text-stroke:0.3px #fff;">1</div>
<div class="t" style="left:1653.40px;top:30.00px;font-size:11px;line-height:12px;color:#d8d8d8;letter-spacing:0.102px;">Channels</div>
<div class="t" style="left:1716.40px;top:30.00px;font-size:11px;line-height:12px;color:#d8d8d8;letter-spacing:0.244px;">Edit</div>
<div class="t" style="left:1751.25px;top:30.00px;font-size:11px;line-height:12px;color:#d8d8d8;letter-spacing:0.391px;">Object</div>
<div class="t" style="left:1800.20px;top:30.00px;font-size:11px;line-height:12px;color:#d8d8d8;letter-spacing:0.490px;">Show</div>
<div class="t" style="left:1647.00px;top:50.00px;font-size:11px;line-height:12px;color:#c4c4c4;font-weight:700;letter-spacing:0.333px;">topCap1</div>
<div class="t" style="right:92.13px;top:66.00px;font-size:11px;line-height:12px;color:#c4c4c4;letter-spacing:-0.334px;">Translate X</div>
<div class="t" style="left:1844.20px;top:65.00px;font-size:11px;line-height:12px;color:#d8d8d8;">0</div>
<div class="t" style="right:92.11px;top:82.00px;font-size:11px;line-height:12px;color:#c4c4c4;letter-spacing:-0.314px;">Translate Y</div>
<div class="t" style="left:1844.20px;top:81.00px;font-size:11px;line-height:12px;color:#d8d8d8;letter-spacing:-0.247px;">523762...</div>
<div class="t" style="right:92.07px;top:98.00px;font-size:11px;line-height:12px;color:#c4c4c4;letter-spacing:-0.273px;">Translate Z</div>
<div class="t" style="left:1844.20px;top:97.00px;font-size:11px;line-height:12px;color:#d8d8d8;">0</div>
<div class="t" style="right:91.97px;top:114.00px;font-size:11px;line-height:12px;color:#c4c4c4;letter-spacing:-0.173px;">Rotate X</div>
<div class="t" style="left:1844.20px;top:113.00px;font-size:11px;line-height:12px;color:#d8d8d8;">0</div>
<div class="t" style="right:91.94px;top:130.00px;font-size:11px;line-height:12px;color:#c4c4c4;letter-spacing:-0.144px;">Rotate Y</div>
<div class="t" style="left:1844.20px;top:129.00px;font-size:11px;line-height:12px;color:#d8d8d8;">0</div>
<div class="t" style="right:91.88px;top:146.00px;font-size:11px;line-height:12px;color:#c4c4c4;letter-spacing:-0.084px;">Rotate Z</div>
<div class="t" style="left:1844.20px;top:145.00px;font-size:11px;line-height:12px;color:#d8d8d8;">0</div>
<div class="t" style="right:92.40px;top:162.00px;font-size:11px;line-height:12px;color:#c4c4c4;letter-spacing:-0.600px;">Scale X</div>
<div class="t" style="left:1844.20px;top:161.00px;font-size:11px;line-height:12px;color:#d8d8d8;">1</div>
<div class="t" style="right:92.40px;top:178.00px;font-size:11px;line-height:12px;color:#c4c4c4;letter-spacing:-0.600px;">Scale Y</div>
<div class="t" style="left:1844.20px;top:177.00px;font-size:11px;line-height:12px;color:#d8d8d8;">1</div>
<div class="t" style="right:92.40px;top:194.00px;font-size:11px;line-height:12px;color:#c4c4c4;letter-spacing:-0.600px;">Scale Z</div>
<div class="t" style="left:1844.20px;top:193.00px;font-size:11px;line-height:12px;color:#d8d8d8;">1</div>
<div class="t" style="right:92.16px;top:210.00px;font-size:11px;line-height:12px;color:#c4c4c4;letter-spacing:-0.359px;">Visibility</div>
<div class="t" style="left:1844.20px;top:209.00px;font-size:11px;line-height:12px;color:#d8d8d8;letter-spacing:0.750px;">on</div>
<div class="t" style="left:1647.30px;top:226.00px;font-size:11px;line-height:12px;color:#c4c4c4;font-weight:700;letter-spacing:-0.510px;">SHAPES</div>
<div class="t" style="left:1656.60px;top:242.00px;font-size:11px;line-height:12px;color:#c4c4c4;font-weight:700;letter-spacing:0.380px;">topCapShape1</div>
<div class="t" style="left:1647.30px;top:258.00px;font-size:11px;line-height:12px;color:#c4c4c4;font-weight:700;letter-spacing:-0.009px;">INPUTS</div>
<div class="t" style="left:1656.60px;top:274.00px;font-size:11px;line-height:12px;color:#c4c4c4;font-weight:700;letter-spacing:0.490px;">revolvetopCap1</div>
<div class="t" style="left:1656.60px;top:290.00px;font-size:11px;line-height:12px;color:#c4c4c4;font-weight:700;letter-spacing:0.360px;">makeNurbCylinder1</div>
<div class="t" style="left:1572.40px;top:80.60px;font-size:13px;line-height:15px;color:#777c84;font-weight:700;z-index:2;transform-origin:0 0;transform:scaleX(0.8);-webkit-text-stroke:0.4px #777c84;">TOP</div>
<div class="t" style="left:1565.50px;top:112.20px;font-size:9px;line-height:10px;color:#7b8090;font-weight:700;z-index:2;transform-origin:0 100%;transform:scale(1.05,0.42);opacity:.8;">FRONT</div>
<div class="t" style="left:1917.00px;top:15.80px;font-size:11px;line-height:12px;color:#cccccc;letter-spacing:0.101px;transform-origin:0 0;transform:rotate(90deg);">Channel Box / Layer Editor</div>
<div class="t" style="left:1917.00px;top:174.60px;font-size:11px;line-height:12px;color:#a8a8a8;letter-spacing:0.468px;transform-origin:0 0;transform:rotate(90deg);">Modeling Toolkit</div>
<div class="t" style="left:1917.00px;top:284.20px;font-size:11px;line-height:12px;color:#a8a8a8;letter-spacing:0.556px;transform-origin:0 0;transform:rotate(90deg);">Attribute Editor</div>
</body>
</html>
